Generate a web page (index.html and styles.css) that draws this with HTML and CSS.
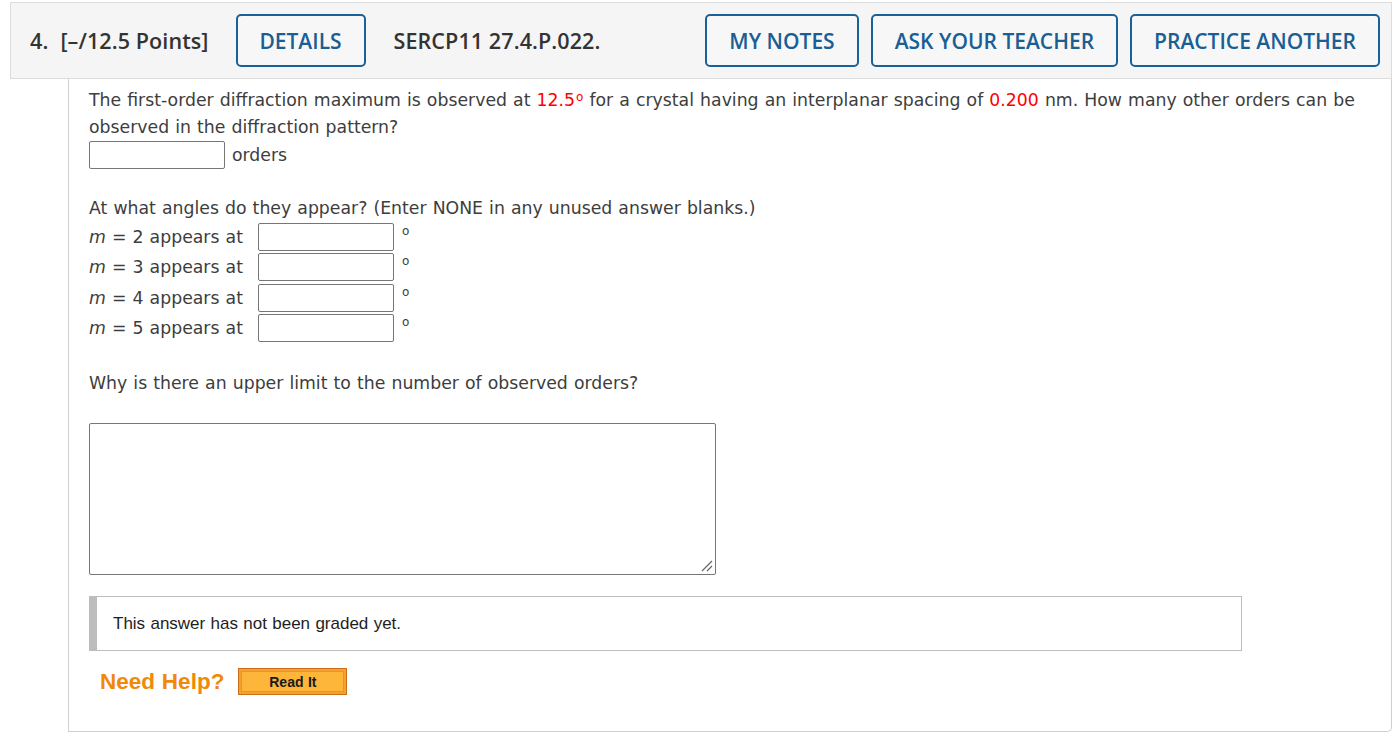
FILE: index.html
```html
<!DOCTYPE html>
<html>
<head>
<meta charset="utf-8">
<link rel="stylesheet" href="styles.css">
</head>
<body>
<div class="question">
  <div class="qhead">
    <span class="qnum">4.</span>
    <span class="points">[–/12.5 Points]</span>
    <button class="hbtn details">DETAILS</button>
    <span class="qcode">SERCP11 27.4.P.022.</span>
    <div class="spacer"></div>
    <button class="hbtn">MY NOTES</button>
    <button class="hbtn">ASK YOUR TEACHER</button>
    <button class="hbtn">PRACTICE ANOTHER</button>
  </div>
  <div class="qbody">
    <p class="para">The first-order diffraction maximum is observed at <span class="red">12.5</span><sup class="deg">o</sup> for a crystal having an interplanar spacing of <span class="red">0.200</span> nm. How many other orders can be observed in the diffraction pattern?</p>
    <div class="ansline"><span class="box"></span><span class="unit">orders</span></div>

    <p class="para gap">At what angles do they appear? (Enter NONE in any unused answer blanks.)</p>
    <div class="rows">
      <div class="row"><span class="lbl"><i>m</i> = 2 appears at</span><span class="box"></span><span class="degmark">o</span></div>
      <div class="row"><span class="lbl"><i>m</i> = 3 appears at</span><span class="box"></span><span class="degmark">o</span></div>
      <div class="row"><span class="lbl"><i>m</i> = 4 appears at</span><span class="box"></span><span class="degmark">o</span></div>
      <div class="row"><span class="lbl"><i>m</i> = 5 appears at</span><span class="box"></span><span class="degmark">o</span></div>
    </div>

    <p class="para why">Why is there an upper limit to the number of observed orders?</p>
    <div class="textarea">
      <svg class="grip" width="12" height="12" viewBox="0 0 12 12"><path d="M11 1 L1 11 M11 6 L6 11" stroke="#666" stroke-width="1.2" fill="none"/></svg>
    </div>

    <div class="graded">This answer has not been graded yet.</div>

    <div class="help">
      <span class="needhelp">Need Help?</span>
      <span class="readit">Read It</span>
    </div>
  </div>
</div>
</body>
</html>
```

FILE: styles.css
```css
html, body {
  margin: 0;
  padding: 0;
  background: #fff;
}

.question {
  padding: 2px 2px 0 10px;
  width: 1382px;
}

.qhead {
  display: flex;
  align-items: center;
  height: 75px;
  background: #f5f5f5;
  border: 1px solid #dcdcdc;
  padding: 0 11px 0 19px;
  font-family: "Open Sans", "Liberation Sans", sans-serif;
  font-weight: 600;
  font-size: 21.5px;
  letter-spacing: 0.1px;
  color: #333;
}

.qnum {
  margin-right: 12px;
}

.points {
  margin-right: 27px;
}

.qcode {
  margin-left: 28px;
}

.spacer {
  flex: 1;
}

.hbtn {
  height: 53px;
  border: 2px solid #1a6198;
  border-radius: 5px;
  background: #f7f7f7;
  color: #1a5e94;
  font-family: "Open Sans", "Liberation Sans", sans-serif;
  font-weight: 600;
  font-size: 21px;
  padding: 0 22px;
  margin-left: 12px;
  box-sizing: border-box;
}

.hbtn.details {
  margin-left: 0;
  width: 130px;
  padding: 0;
}

.qbody {
  margin-left: 58px;
  border: 1px solid #cfcfcf;
  border-top: none;
  border-radius: 0 0 5px 0;
  padding: 8px 19px 36px 20px;
  font-family: "DejaVu Sans", Verdana, sans-serif;
  font-size: 17.3px;
  word-spacing: 0.6px;
  color: #3d3d3d;
}

.para {
  margin: 0;
  line-height: 27px;
}

.red {
  color: #f00;
}

.deg {
  font-size: 12px;
  vertical-align: 5px;
  line-height: 0;
  color: #f00;
  margin-left: 1px;
}

.ansline {
  display: flex;
  align-items: flex-start;
  gap: 7px;
  height: 29px;
}

.unit {
  line-height: 28px;
}

.box {
  display: inline-block;
  width: 136px;
  height: 28px;
  box-sizing: border-box;
  border: 1px solid #767676;
  border-radius: 2px;
  background: #fff;
}

.gap {
  margin-top: 25px;
}

.rows {
  display: flex;
  flex-direction: column;
  gap: 2px;
  margin-top: 1px;
}

.row {
  display: flex;
  align-items: center;
  height: 28.3px;
}

.row .lbl {
  width: 169px;
}

.row i {
  font-style: italic;
}

.degmark {
  font-size: 12px;
  margin-left: 8px;
  align-self: flex-start;
  margin-top: 1px;
}

.why {
  margin-top: 28px;
}

.textarea {
  position: relative;
  margin-top: 26px;
  width: 627px;
  height: 152px;
  box-sizing: border-box;
  border: 1px solid #767676;
  border-radius: 2px;
}

.grip {
  position: absolute;
  right: 2px;
  bottom: 2px;
}

.graded {
  margin-top: 21px;
  width: 1153px;
  height: 55px;
  box-sizing: border-box;
  border: 1px solid #bdbdbd;
  border-left: 8px solid #bdbdbd;
  padding-left: 16px;
  display: flex;
  align-items: center;
  font-family: "Liberation Sans", Arial, sans-serif;
  font-size: 17px;
  color: #1e1e1e;
}

.help {
  display: flex;
  align-items: center;
  margin-top: 17px;
  padding-left: 11px;
}

.needhelp {
  font-family: "Liberation Sans", Arial, sans-serif;
  font-weight: bold;
  font-size: 22.5px;
  color: #f0880a;
  margin-right: 14px;
}

.readit {
  display: flex;
  align-items: center;
  justify-content: center;
  width: 109px;
  height: 27px;
  box-sizing: border-box;
  border: 1px solid #c86e1c;
  background: #fdb53a;
  box-shadow: inset 0 0 0 2px #f6a12c, inset 0 0 0 3px #e9932b;
  font-family: "Liberation Sans", Arial, sans-serif;
  font-weight: bold;
  font-size: 14px;
  color: #1a1a1a;
}
```
